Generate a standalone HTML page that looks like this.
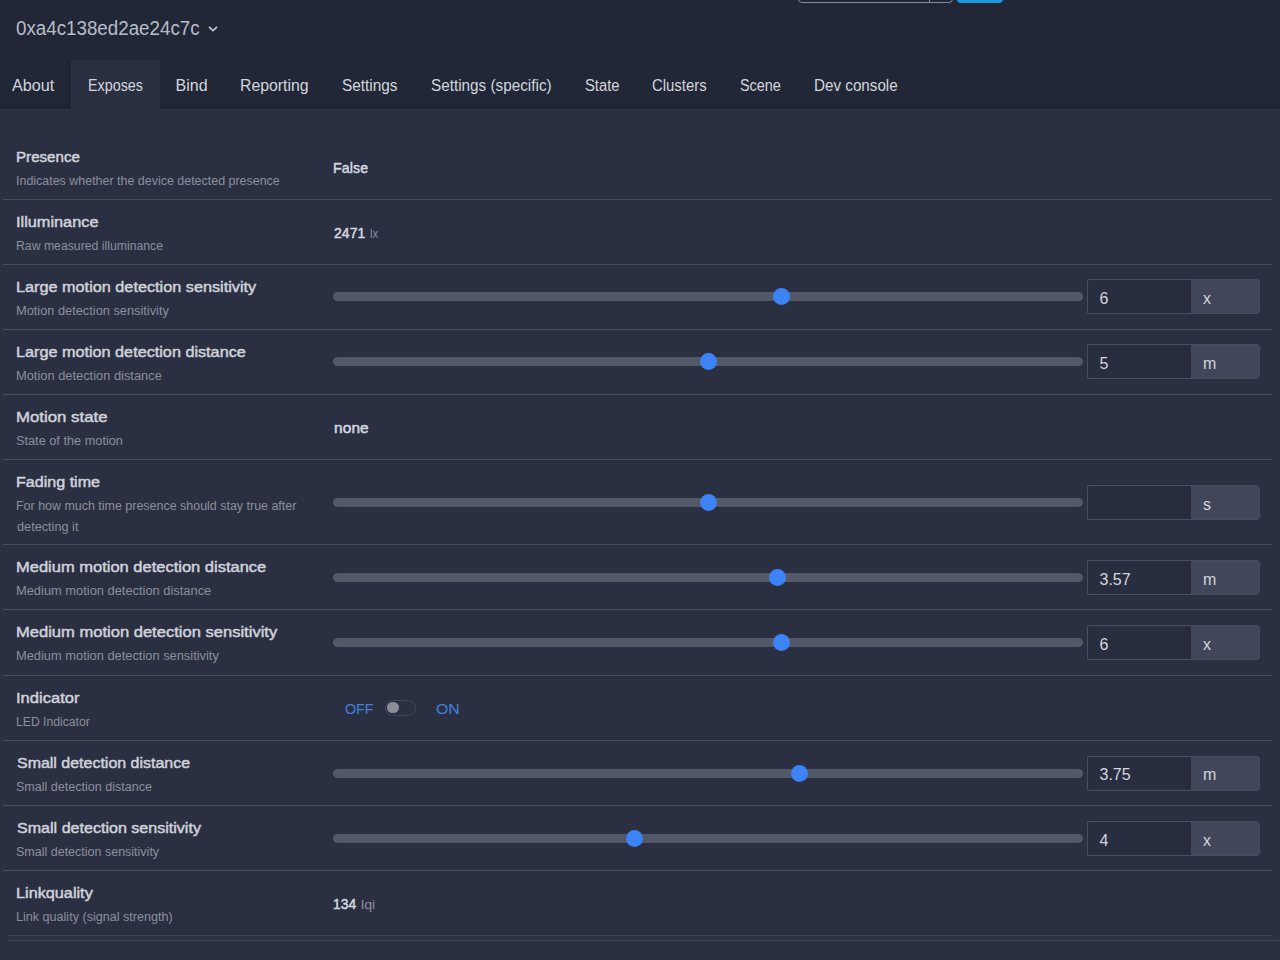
<!DOCTYPE html>
<html><head><meta charset="utf-8"><style>
*{box-sizing:border-box;margin:0;padding:0}
html,body{width:1280px;height:960px;overflow:hidden;background:#2a2f42;font-family:"Liberation Sans",sans-serif}
.a{position:absolute;white-space:nowrap;transform-origin:0 0}
.sep{position:absolute;left:3px;width:1269px;height:1px;background:#474c5e}
.track{position:absolute;left:333px;width:750px;height:9px;border-radius:4.5px;background:#545969}
.thumb{position:absolute;width:17px;height:17px;border-radius:50%;background:#3c83f5}
.ig{position:absolute;left:1087px;width:173px;height:35px}
.ig .in{position:absolute;left:0;top:0;width:105px;height:35px;background:#282d40;border:1px solid #484d60;border-right:none;border-radius:2px 0 0 2px}
.ig .strip{position:absolute;left:97px;top:1px;width:7px;height:33px;background:#272b3d}
.ig .ad{position:absolute;left:104px;top:0;width:69px;height:35px;background:#41465a;border:1px solid #464b5f;border-left:none;border-radius:0 4px 4px 0}
</style></head><body>
<div class="a" style="left:0;top:0;width:1280px;height:109px;background:#212736"></div>
<div class="a" style="left:798px;top:-20px;width:155px;height:23px;border:1.5px solid #8a8e98;border-radius:4px"></div>
<div class="a" style="left:929px;top:-10px;width:1px;height:12px;background:#8a8e98"></div>
<div class="a" style="left:957px;top:-20px;width:46px;height:23px;background:#1a9be0;border-radius:4px"></div>
<svg class="a" style="left:207px;top:24px" width="12" height="9" viewBox="0 0 12 9"><path d="M2 2.8 L6 6.6 L10 2.8" fill="none" stroke="#c0c4cd" stroke-width="1.8"/></svg>
<div class="a" style="left:0;top:104px;width:1280px;height:5px;background:#1f2432"></div>
<div class="a" style="left:0;top:109px;width:1280px;height:1px;background:#2c3145"></div>
<div class="a" style="left:66px;top:60px;width:5px;height:49px;background:#1f2432"></div>
<div class="a" style="left:71px;top:60px;width:89px;height:50px;background:#2a2f42"></div>

<div class="a" style="left:15.96px;top:15.80px;font-size:20px;line-height:24px;color:#b9bdc7;transform:scaleX(0.9381)">0xa4c138ed2ae24c7c</div>
<div class="a" style="left:11.75px;top:76.30px;font-size:16px;line-height:20px;color:#d3d6dd;transform:scaleX(1.0119)">About</div>
<div class="a" style="left:87.85px;top:76.30px;font-size:16px;line-height:20px;color:#d3d6dd;transform:scaleX(0.8958)">Exposes</div>
<div class="a" style="left:175.50px;top:76.30px;font-size:16px;line-height:20px;color:#d3d6dd;transform:scaleX(1.0000)">Bind</div>
<div class="a" style="left:239.76px;top:76.30px;font-size:16px;line-height:20px;color:#d3d6dd;transform:scaleX(0.9890)">Reporting</div>
<div class="a" style="left:341.54px;top:76.30px;font-size:16px;line-height:20px;color:#d3d6dd;transform:scaleX(0.9605)">Settings</div>
<div class="a" style="left:430.54px;top:76.30px;font-size:16px;line-height:20px;color:#d3d6dd;transform:scaleX(0.9552)">Settings (specific)</div>
<div class="a" style="left:584.58px;top:76.30px;font-size:16px;line-height:20px;color:#d3d6dd;transform:scaleX(0.9250)">State</div>
<div class="a" style="left:652.07px;top:76.30px;font-size:16px;line-height:20px;color:#d3d6dd;transform:scaleX(0.9310)">Clusters</div>
<div class="a" style="left:740.30px;top:76.30px;font-size:16px;line-height:20px;color:#d3d6dd;transform:scaleX(0.9000)">Scene</div>
<div class="a" style="left:814.45px;top:76.30px;font-size:16px;line-height:20px;color:#d3d6dd;transform:scaleX(0.9506)">Dev console</div>
<div class="a" style="left:16.02px;top:147.20px;font-size:15.5px;line-height:20px;-webkit-text-stroke:0.5px;color:#cfd2d9;transform:scaleX(0.9766)">Presence</div>
<div class="a" style="left:16.00px;top:171.00px;font-size:12.5px;line-height:20px;color:#8c909d;transform:scaleX(0.9962)">Indicates whether the device detected presence</div>
<div class="a" style="left:332.66px;top:157.60px;font-size:15px;line-height:20px;-webkit-text-stroke:0.5px;letter-spacing:0.1px;color:#d6d9e0;transform:scaleX(0.9444)">False</div>
<div class="a" style="left:15.95px;top:212.20px;font-size:15.5px;line-height:20px;-webkit-text-stroke:0.5px;color:#cfd2d9;transform:scaleX(1.0519)">Illuminance</div>
<div class="a" style="left:16.02px;top:236.00px;font-size:12.5px;line-height:20px;color:#8c909d;transform:scaleX(0.9799)">Raw measured illuminance</div>
<div class="a" style="left:333.60px;top:222.60px;font-size:15px;line-height:20px;-webkit-text-stroke:0.5px;letter-spacing:0.1px;color:#d6d9e0;transform:scaleX(0.9265)">2471</div>
<div class="a" style="left:369.59px;top:224.40px;font-size:12.5px;line-height:21px;color:#8c909d;transform:scaleX(0.9125)">lx</div>
<div class="a" style="left:15.95px;top:277.20px;font-size:15.5px;line-height:20px;-webkit-text-stroke:0.5px;color:#cfd2d9;transform:scaleX(1.0480)">Large motion detection sensitivity</div>
<div class="a" style="left:15.98px;top:301.00px;font-size:12.5px;line-height:20px;color:#8c909d;transform:scaleX(1.0235)">Motion detection sensitivity</div>
<div class="a" style="left:15.95px;top:342.20px;font-size:15.5px;line-height:20px;-webkit-text-stroke:0.5px;color:#cfd2d9;transform:scaleX(1.0457)">Large motion detection distance</div>
<div class="a" style="left:15.97px;top:366.00px;font-size:12.5px;line-height:20px;color:#8c909d;transform:scaleX(1.0286)">Motion detection distance</div>
<div class="a" style="left:15.92px;top:407.20px;font-size:15.5px;line-height:20px;-webkit-text-stroke:0.5px;color:#cfd2d9;transform:scaleX(1.0843)">Motion state</div>
<div class="a" style="left:15.98px;top:431.00px;font-size:12.5px;line-height:20px;color:#8c909d;transform:scaleX(1.0192)">State of the motion</div>
<div class="a" style="left:333.60px;top:417.60px;font-size:15px;line-height:20px;-webkit-text-stroke:0.5px;letter-spacing:0.1px;color:#d6d9e0;transform:scaleX(1.0294)">none</div>
<div class="a" style="left:15.96px;top:472.20px;font-size:15.5px;line-height:20px;-webkit-text-stroke:0.5px;color:#cfd2d9;transform:scaleX(1.0375)">Fading time</div>
<div class="a" style="left:16.00px;top:496.00px;font-size:12.5px;line-height:20px;color:#8c909d;transform:scaleX(0.9964)">For how much time presence should stay true after</div>
<div class="a" style="left:17.00px;top:517.00px;font-size:12.5px;line-height:20px;color:#8c909d;transform:scaleX(1.0164)">detecting it</div>
<div class="a" style="left:15.94px;top:557.20px;font-size:15.5px;line-height:20px;-webkit-text-stroke:0.5px;color:#cfd2d9;transform:scaleX(1.0641)">Medium motion detection distance</div>
<div class="a" style="left:15.97px;top:581.00px;font-size:12.5px;line-height:20px;color:#8c909d;transform:scaleX(1.0293)">Medium motion detection distance</div>
<div class="a" style="left:15.93px;top:622.20px;font-size:15.5px;line-height:20px;-webkit-text-stroke:0.5px;color:#cfd2d9;transform:scaleX(1.0676)">Medium motion detection sensitivity</div>
<div class="a" style="left:15.97px;top:646.00px;font-size:12.5px;line-height:20px;color:#8c909d;transform:scaleX(1.0281)">Medium motion detection sensitivity</div>
<div class="a" style="left:15.93px;top:688.20px;font-size:15.5px;line-height:20px;-webkit-text-stroke:0.5px;color:#cfd2d9;transform:scaleX(1.0678)">Indicator</div>
<div class="a" style="left:16.03px;top:712.00px;font-size:12.5px;line-height:20px;color:#8c909d;transform:scaleX(0.9733)">LED Indicator</div>
<div class="a" style="left:17.00px;top:753.20px;font-size:15.5px;line-height:20px;-webkit-text-stroke:0.5px;color:#cfd2d9;transform:scaleX(1.0298)">Small detection distance</div>
<div class="a" style="left:16.00px;top:777.00px;font-size:12.5px;line-height:20px;color:#8c909d;transform:scaleX(1.0037)">Small detection distance</div>
<div class="a" style="left:17.00px;top:818.20px;font-size:15.5px;line-height:20px;-webkit-text-stroke:0.5px;color:#cfd2d9;transform:scaleX(1.0365)">Small detection sensitivity</div>
<div class="a" style="left:16.00px;top:842.00px;font-size:12.5px;line-height:20px;color:#8c909d;transform:scaleX(1.0000)">Small detection sensitivity</div>
<div class="a" style="left:15.95px;top:883.20px;font-size:15.5px;line-height:20px;-webkit-text-stroke:0.5px;color:#cfd2d9;transform:scaleX(1.0479)">Linkquality</div>
<div class="a" style="left:15.99px;top:907.00px;font-size:12.5px;line-height:20px;color:#8c909d;transform:scaleX(1.0065)">Link quality (signal strength)</div>
<div class="a" style="left:332.68px;top:893.60px;font-size:15px;line-height:20px;-webkit-text-stroke:0.5px;letter-spacing:0.1px;color:#d6d9e0;transform:scaleX(0.9200)">134</div>
<div class="a" style="left:360.76px;top:895.40px;font-size:12.5px;line-height:21px;color:#8c909d;transform:scaleX(1.1364)">lqi</div>
<div class="track" style="top:292.10px"></div>
<div class="thumb" style="left:772.90px;top:288.00px"></div>
<div class="ig" style="top:279.10px"><div class="in"></div><div class="strip"></div><div class="ad"></div></div>
<div class="a" style="left:1099.5px;top:288.80px;font-size:16px;line-height:20px;color:#d4d7de">6</div>
<div class="a" style="left:1203px;top:288.80px;font-size:16px;line-height:20px;color:#d4d7de">x</div>
<div class="track" style="top:357.40px"></div>
<div class="thumb" style="left:699.90px;top:353.30px"></div>
<div class="ig" style="top:344.40px"><div class="in"></div><div class="strip"></div><div class="ad"></div></div>
<div class="a" style="left:1099.5px;top:354.10px;font-size:16px;line-height:20px;color:#d4d7de">5</div>
<div class="a" style="left:1203px;top:354.10px;font-size:16px;line-height:20px;color:#d4d7de">m</div>
<div class="track" style="top:497.80px"></div>
<div class="thumb" style="left:699.70px;top:493.70px"></div>
<div class="ig" style="top:484.80px"><div class="in"></div><div class="strip"></div><div class="ad"></div></div>
<div class="a" style="left:1203px;top:494.50px;font-size:16px;line-height:20px;color:#d4d7de">s</div>
<div class="track" style="top:572.90px"></div>
<div class="thumb" style="left:769.40px;top:568.80px"></div>
<div class="ig" style="top:559.90px"><div class="in"></div><div class="strip"></div><div class="ad"></div></div>
<div class="a" style="left:1099.5px;top:569.60px;font-size:16px;line-height:20px;color:#d4d7de">3.57</div>
<div class="a" style="left:1203px;top:569.60px;font-size:16px;line-height:20px;color:#d4d7de">m</div>
<div class="track" style="top:638.00px"></div>
<div class="thumb" style="left:773.30px;top:633.90px"></div>
<div class="ig" style="top:625.00px"><div class="in"></div><div class="strip"></div><div class="ad"></div></div>
<div class="a" style="left:1099.5px;top:634.70px;font-size:16px;line-height:20px;color:#d4d7de">6</div>
<div class="a" style="left:1203px;top:634.70px;font-size:16px;line-height:20px;color:#d4d7de">x</div>
<div class="a" style="left:345.2px;top:698.70px;font-size:15.5px;line-height:20px;color:#4580dd;transform:scaleX(0.92)">OFF</div>
<div class="a" style="left:384.5px;top:699.60px;width:31.5px;height:16.5px;border:1px solid #41465a;border-radius:8.5px"></div>
<div class="a" style="left:387px;top:701.90px;width:11.5px;height:11.5px;border-radius:50%;background:#8a8d97"></div>
<div class="a" style="left:435.8px;top:698.70px;font-size:15.5px;line-height:20px;color:#4580dd;transform:scaleX(1.02)">ON</div>
<div class="track" style="top:768.70px"></div>
<div class="thumb" style="left:791.40px;top:764.60px"></div>
<div class="ig" style="top:755.70px"><div class="in"></div><div class="strip"></div><div class="ad"></div></div>
<div class="a" style="left:1099.5px;top:765.40px;font-size:16px;line-height:20px;color:#d4d7de">3.75</div>
<div class="a" style="left:1203px;top:765.40px;font-size:16px;line-height:20px;color:#d4d7de">m</div>
<div class="track" style="top:833.90px"></div>
<div class="thumb" style="left:626.10px;top:829.80px"></div>
<div class="ig" style="top:820.90px"><div class="in"></div><div class="strip"></div><div class="ad"></div></div>
<div class="a" style="left:1099.5px;top:830.60px;font-size:16px;line-height:20px;color:#d4d7de">4</div>
<div class="a" style="left:1203px;top:830.60px;font-size:16px;line-height:20px;color:#d4d7de">x</div>
<div class="sep" style="top:199px"></div>
<div class="sep" style="top:264px"></div>
<div class="sep" style="top:329px"></div>
<div class="sep" style="top:394px"></div>
<div class="sep" style="top:459px"></div>
<div class="sep" style="top:544px"></div>
<div class="sep" style="top:609px"></div>
<div class="sep" style="top:675px"></div>
<div class="sep" style="top:740px"></div>
<div class="sep" style="top:805px"></div>
<div class="sep" style="top:870px"></div>
<div class="sep" style="top:935px;left:8px;width:1264px;background:#3e4355"></div>
<div class="sep" style="top:940px;left:8px;width:1272px;background:#3e4355"></div>
</body></html>
